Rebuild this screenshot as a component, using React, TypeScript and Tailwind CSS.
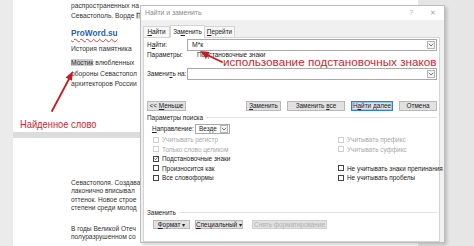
import React from "react";

function Chevron() {
  return (
    <div className="w-[8px] h-[8px] mr-[1px] border border-[#b5b5b5] bg-[#f4f4f4] flex items-center justify-center">
      <svg width="6" height="4" viewBox="0 0 6 4">
        <path d="M0.8 0.8 L3 3 L5.2 0.8" fill="none" stroke="#666" strokeWidth="0.9" />
      </svg>
    </div>
  );
}

function Check({ checked, disabled, label }: { checked?: boolean; disabled?: boolean; label: string }) {
  return (
    <div className="flex items-center h-full gap-[3px]">
      <div
        className={
          "w-[6px] h-[6px] border flex items-center justify-center bg-white " +
          (disabled ? "border-[#cfcfcf]" : "border-[#444]")
        }
      >
        {checked && (
          <svg width="5" height="5" viewBox="0 0 5 5">
            <path d="M0.6 2.6 L2 4 L4.5 0.9" fill="none" stroke="#333" strokeWidth="0.9" />
          </svg>
        )}
      </div>
      <span className={disabled ? "text-[#a8a8a8]" : "text-[#222]"}>{label}</span>
    </div>
  );
}

function Btn({ w, children, primary, disabled }: { w: string; children: React.ReactNode; primary?: boolean; disabled?: boolean }) {
  return (
    <div
      className={
        w +
        " h-full flex items-center justify-center bg-[#e1e1e1] " +
        (primary ? "border border-[#2f7fd0] shadow-[inset_0_0_0_1px_#9cc6ee]" : "border border-[#b8b8b8]") +
        (disabled ? " text-[#b0b0b0] bg-[#dcdcdc] border-[#cfcfcf]" : " text-[#222]")
      }
    >
      {children}
    </div>
  );
}

export default function App() {
  return (
    <div className="relative w-[474px] h-[246px] overflow-hidden bg-[#e9e9e9] font-['Liberation_Sans',Arial,sans-serif]">
      {/* Document */}
      <div className="flex h-full">
        <div className="w-[13px] shrink-0 bg-[#ebebeb]" />
        <div className="w-[405px] shrink-0 flex flex-col">
          <div className="h-[132px] bg-white pl-[58px] pt-[1px] text-[6.7px] text-[#333] whitespace-nowrap">
            <div className="h-[10px] leading-[10px]">распространенных на</div>
            <div className="h-[10px] leading-[10px]">
              Севастополь. Ворде <span className="bg-[#d9d9d9]">П</span>
            </div>
            <div className="mt-[5px] h-[14px] leading-[14px]">
              <span className="inline-block origin-left scale-x-[0.86] text-[9.6px] font-bold text-[#2b5fae] underline decoration-[#e04040] decoration-wavy decoration-[0.6px] underline-offset-[2px]">
                ProWord.su
              </span>
            </div>
            <div className="mt-[4px] h-[10px] leading-[10px]">История памятника</div>
            <div className="mt-[4px] h-[10px] leading-[10px]">
              <span className="bg-[#cdcdcd]">Мостик</span> влюбленных
            </div>
            <div className="mt-[1px] h-[10px] leading-[10px]">обороны Севастопол</div>
            <div className="h-[10px] leading-[10px]">архитекторов России</div>
          </div>
          <div className="h-[6px] bg-[#dcdcdc]" />
          <div className="flex-1 bg-white pl-[58px] pt-[41px] text-[6.6px] text-[#333] whitespace-nowrap">
            <div className="h-[8.33px] leading-[8.33px]">Севастополя. Создава</div>
            <div className="h-[8.33px] leading-[8.33px]">лаконично вписывал</div>
            <div className="h-[8.33px] leading-[8.33px]">оттенок. Новое строе</div>
            <div className="h-[8.33px] leading-[8.33px]">степени среди молод</div>
            <div className="mt-[12.7px] h-[8.33px] leading-[8.33px]">В годы Великой Отеч</div>
            <div className="h-[8.33px] leading-[8.33px]">полуразрушенном со</div>
          </div>
        </div>
        <div className="flex-1 bg-[#e6e6e6]" />
      </div>

      {/* Dialog window */}
      <div className="absolute left-[140px] top-[5px] w-[305px] h-[238px] border border-[#bdbdbd] bg-[#f0f0f0] shadow-[2px_2px_3px_rgba(0,0,0,0.18)] flex flex-col text-[6.4px] leading-[1.15] text-[#222]">
        <div className="h-[14px] bg-white flex items-center pl-[4px] pr-[8px] text-[6.8px] text-[#8a8a8a]">
          <span>Найти и заменить</span>
          <span className="ml-auto mr-[17px] text-[#aaa]">?</span>
          <span className="text-[#aaa] text-[7px]">✕</span>
        </div>
        {/* tabs */}
        <div className="mt-[4px] ml-[2px] h-[13px] flex items-end">
          <div className="h-[11px] w-[27px] border border-b-0 border-[#d4d4d4] bg-[#f7f7f7] flex items-center justify-center">
            <span><u>Н</u>айти</span>
          </div>
          <div className="h-[13px] w-[35px] -mb-[1px] border border-b-0 border-[#d4d4d4] bg-white flex items-center justify-center relative z-10">
            <span>За<u>м</u>енить</span>
          </div>
          <div className="h-[11px] w-[30px] border border-b-0 border-l-0 border-[#d4d4d4] bg-[#f7f7f7] flex items-center justify-center">
            <span><u>П</u>ерейти</span>
          </div>
        </div>
        {/* panel */}
        <div className="ml-[2px] w-[297px] h-[206px] border border-[#d4d4d4] bg-white flex flex-col pl-[3px] pr-[2px] whitespace-nowrap">
          <div className="mt-[1px] h-[12px] flex items-center">
            <div className="w-[40px]">Н<u>а</u>йти:</div>
            <div className="flex-1 h-full border border-[#a9a9a9] flex items-center pl-[4px]">
              <span className="text-[6.8px]">M*к</span>
              <div className="ml-auto"><Chevron /></div>
            </div>
          </div>
          <div className="h-[7px] flex items-center">
            <div className="w-[50px]">Параметры:</div>
            <div>Подстановочные знаки</div>
          </div>
          <div className="mt-[10px] h-[12px] flex items-center">
            <div className="w-[40px]">Замени<u>т</u>ь на:</div>
            <div className="flex-1 h-full border border-[#a9a9a9] flex items-center">
              <div className="ml-auto"><Chevron /></div>
            </div>
          </div>
          <div className="mt-[21px] h-[10px] flex items-center">
            <Btn w="w-[39px]"><span>&lt;&lt; <u>М</u>еньше</span></Btn>
            <div className="ml-auto flex h-full gap-[6px]">
              <Btn w="w-[35px]"><span><u>З</u>аменить</span></Btn>
              <Btn w="w-[58px]"><span>Заменить <u>в</u>се</span></Btn>
              <Btn w="w-[42px]" primary><span>Н<u>а</u>йти далее</span></Btn>
              <Btn w="w-[38px]"><span>Отмена</span></Btn>
            </div>
          </div>
          <div className="mt-[3px] h-[8px] flex items-center gap-[3px]">
            <span>Параметры поиска</span>
            <div className="flex-1 h-[1px] bg-[#e3e3e3]" />
          </div>
          <div className="mt-[2px] h-[10px] flex items-center pl-[5px]">
            <div className="w-[43px]"><u>Н</u>аправление:</div>
            <div className="w-[35px] h-full border border-[#a9a9a9] flex items-center pl-[3px]">
              <span>Везде</span>
              <div className="ml-auto"><Chevron /></div>
            </div>
          </div>
          <div className="mt-[1px] grid grid-cols-[185px_1fr] grid-rows-[repeat(5,9.6px)] pl-[6px]">
            <Check disabled label="Учитывать регистр" />
            <Check disabled label="Учитывать префикс" />
            <Check disabled label="Только слово целиком" />
            <Check disabled label="Учитывать суффикс" />
            <Check checked label="Подстановочные знаки" />
            <div />
            <Check label="Произносится как" />
            <Check label="Не учитывать знаки препинания" />
            <Check label="Все словоформы" />
            <Check label="Не учитывать пробелы" />
          </div>
          <div className="mt-[26px] h-[8px] flex items-center gap-[3px]">
            <span>Заменить</span>
            <div className="flex-1 h-[1px] bg-[#e3e3e3]" />
          </div>
          <div className="mt-[3px] h-[9px] flex items-center pl-[6px]">
            <Btn w="w-[37px]"><span><u>Ф</u>ормат ▾</span></Btn>
            <div className="w-[5px]" />
            <Btn w="w-[48px]"><span><u>С</u>пециальный ▾</span></Btn>
            <div className="w-[9px]" />
            <Btn w="w-[75px]" disabled><span>Снять форматирование</span></Btn>
          </div>
        </div>
      </div>

      {/* Annotations */}
      <div className="absolute left-[20px] top-[115px] leading-[16px] whitespace-nowrap">
        <span className="inline-block origin-left scale-x-[0.88] text-[10.6px] text-[#c42a2f]">Найденное слово</span>
      </div>
      <div className="absolute left-[223px] top-[54px] text-[11.7px] leading-[16px] text-[#c42a2f] whitespace-nowrap">
        использование подстановочных знаков
      </div>
      <svg className="absolute inset-0 pointer-events-none" width="474" height="246" viewBox="0 0 474 246">
        <path d="M52 111 L69 79" stroke="#c8191f" strokeWidth="1.8" strokeLinecap="round" />
        <polygon points="73,71 71.9,80.8 65.6,77.4" fill="#c8191f" />
        <path d="M222 62 L207.9 55.3" stroke="#c8191f" strokeWidth="1.8" strokeLinecap="round" />
        <polygon points="200,51 209.7,52 206.1,58.6" fill="#c8191f" />
      </svg>
    </div>
  );
}
